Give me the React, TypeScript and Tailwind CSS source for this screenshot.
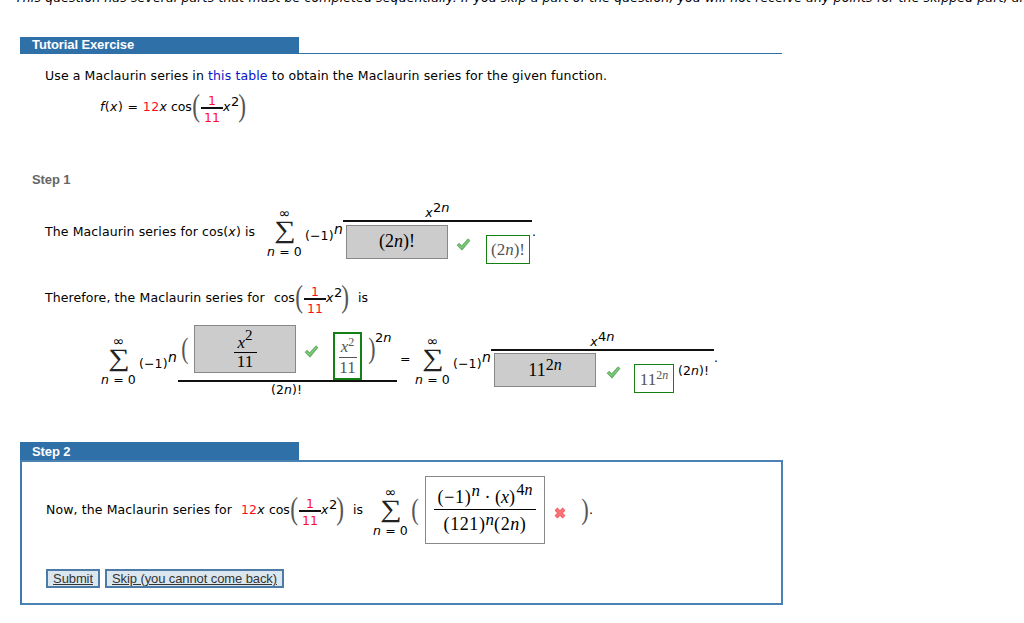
import type { ReactNode } from "react";

type PieceProps = { className?: string; children?: ReactNode };

const serif = "tracking-normal font-['Liberation_Serif',serif]";

function Piece({ className = "", children }: PieceProps) {
  return <div className={`shrink-0 whitespace-pre leading-4 ${className}`}>{children}</div>;
}

function Paren({ className = "text-[31px]", children }: PieceProps) {
  return (
    <div className={`flex h-[29px] w-[7px] shrink-0 items-center justify-center leading-none text-[#555] tracking-normal font-['Liberation_Serif',serif] ${className}`}>
      <span className="-mt-[3px] inline-block scale-x-75">{children}</span>
    </div>
  );
}

function Sum({ className = "" }: { className?: string }) {
  return (
    <div className={`flex h-[52px] w-[35px] shrink-0 flex-col items-center ${className}`}>
      <div className="h-[11px] text-[14px] leading-[11px] tracking-normal">∞</div>
      <div className="flex h-[25px] items-center text-[25px] leading-[20px] tracking-normal text-[#222] font-['Liberation_Serif',serif]">
        <span className="-mt-[4px] inline-block scale-x-120">∑</span>
      </div>
      <div className="whitespace-pre leading-4">
        <i>n</i> = 0
      </div>
    </div>
  );
}

function SignPower({ className = "" }: { className?: string }) {
  return (
    <div className={`flex w-[38px] shrink-0 items-start ${className}`}>
      <Piece className="mt-[7px] w-[29px]">(−1)</Piece>
      <Piece className="text-[14px] italic">n</Piece>
    </div>
  );
}

function CosArgument() {
  return (
    <div className="flex h-[30px] w-[74px] shrink-0 items-start">
      <Piece className="mt-[7px] w-[21px] tracking-[-0.1px]">cos</Piece>
      <Paren className="ml-px text-[31px]">(</Paren>
      <div className="ml-px flex w-[22px] shrink-0 flex-col items-center text-[#ff0a1e]">
        <div className="h-[15px] leading-[17px]">1</div>
        <div className="h-[2px] w-full bg-[#111]" />
        <div className="h-[14px] leading-[17px]">11</div>
      </div>
      <Piece className="mt-[7px] w-[8px] italic">x</Piece>
      <Piece className="mt-[2px] w-[8px] text-[13px]">2</Piece>
      <Paren>)</Paren>
    </div>
  );
}

function Check({ className = "" }: { className?: string }) {
  return (
    <svg className={`shrink-0 ${className}`} width="15" height="13" viewBox="0 0 15 13">
      <path d="M1 7.2 3.2 5.2 5.7 7.8 12 .8 14 2.5 6 12.2Z" fill="#69b969" stroke="#58a85a" strokeWidth=".7" strokeLinejoin="round" />
      <path d="M2.5 7 5.8 9.7 12.5 2.3" fill="none" stroke="#94d28e" strokeWidth=".9" />
    </svg>
  );
}

function Cross({ className = "" }: { className?: string }) {
  return (
    <svg className={`shrink-0 ${className}`} width="14" height="14" viewBox="0 0 14 14">
      <path d="M3 3 11 11M11 3 3 11" stroke="#f0606a" strokeWidth="4" />
      <path d="M3 3 11 11M11 3 3 11" stroke="#fb7478" strokeWidth="2" />
    </svg>
  );
}

function TitleBar({ children, className = "" }: PieceProps) {
  return (
    <div className={`w-[279px] bg-[#3070a9] pl-[12px] text-[13px] font-bold tracking-[-0.1px] text-white font-['Liberation_Sans',sans-serif] ${className}`}>
      {children}
    </div>
  );
}

export default function App() {
  return (
    <div className="h-[623px] w-[1024px] overflow-hidden bg-white text-[12.5px] tracking-[0.11px] text-black font-['DejaVu_Sans',sans-serif]">
      <div className="flex h-[37px] items-start pl-[15px]">
        <p className="-mt-[10px] whitespace-nowrap italic leading-4 tracking-[0.13px]">
          This question has several parts that must be completed sequentially. If you skip a part of the question, you will not receive any points for the skipped part, and you will not be able to come back to the skipped part.
        </p>
      </div>

      <section className="ml-[20px] w-[762px]">
        <div className="h-[17px] border-b border-[#3070a9]">
          <TitleBar className="h-[17px] leading-[16px]">Tutorial Exercise</TitleBar>
        </div>
        <div className="pl-[25px] pt-[14px]">
          <p className="whitespace-nowrap leading-4">
            Use a Maclaurin series in <span className="text-[#0a14c8]">this table</span> to obtain the Maclaurin series for the given function.
          </p>
          <div className="mt-[8px] flex h-[30px] items-start pl-[55px]">
            <Piece className="mt-[7px] w-[71px] tracking-[0.4px]">
              <i>f</i>(<i>x</i>) = <span className="text-[#ff0a1e]">12</span><i>x</i>
            </Piece>
            <CosArgument />
          </div>
        </div>
      </section>

      <section className="ml-[20px] h-[320px] w-[763px] pt-[50px]">
        <h2 className="pl-[12px] text-[13px] font-bold leading-4 tracking-[-0.1px] text-[#666] font-['Liberation_Sans',sans-serif]">Step 1</h2>

        <div className="mt-[17px] flex h-[60px] items-start pl-[25px]">
          <Piece className="mt-[19px] w-[222px]">
            The Maclaurin series for cos(<i>x</i>) is
          </Piece>
          <Sum className="mt-[3px]" />
          <SignPower className="ml-[3px] mt-[16px]" />
          <div className="w-[189px] shrink-0">
            <div className="flex h-[15px] items-start justify-center">
              <Piece className="italic">x</Piece>
              <Piece className="-mt-[5px] text-[13px]">2<i>n</i></Piece>
            </div>
            <div className="h-[2px] bg-[#111]" />
            <div className="flex items-start pl-[3px] pt-[3px]">
              <div className={`h-[34px] w-[102px] shrink-0 border border-[#888] bg-[#ccc] pt-px text-center text-[18px] leading-[28px] ${serif}`}>
                (2<i>n</i>)!
              </div>
              <Check className="ml-[8px] mt-[13px]" />
              <div className={`ml-[15px] mt-[10px] h-[29px] w-[44px] shrink-0 border border-[#148014] text-center text-[17px] leading-[27px] text-[#555] ${serif}`}>
                (2<i>n</i>)!
              </div>
            </div>
          </div>
          <Piece className="mt-[19px]">.</Piece>
        </div>

        <div className="mt-[18px] flex h-[30px] items-start pl-[25px]">
          <Piece className="mt-[7px] w-[229px]">Therefore, the Maclaurin series for</Piece>
          <CosArgument />
          <Piece className="ml-[10px] mt-[7px]">is</Piece>
        </div>

        <div className="mt-[12px] flex h-[76px] items-start pl-[81px]">
          <Sum className="mt-[11px]" />
          <SignPower className="ml-[3px] mt-[24px]" />
          <div className="ml-px w-[219px] shrink-0">
            <div className="flex h-[55px] items-start pl-[3px]">
              <Paren className="mt-[10px] text-[29px]">(</Paren>
              <div className={`ml-[6px] flex h-[48px] w-[102px] flex-col items-center border border-[#888] bg-[#ccc] text-[17px] ${serif}`}>
                <div className="flex h-[26px] items-start">
                  <i className="mt-[7px] leading-[20px]">x</i>
                  <span className="text-[15px] leading-[18px]">2</span>
                </div>
                <div className="h-px w-[23px] bg-black" />
                <div className="leading-[18px]">11</div>
              </div>
              <Check className="ml-[8px] mt-[20px]" />
              <div className={`ml-[14px] mt-[7px] flex h-[48px] w-[29px] flex-col items-center border-2 border-[#148014] text-[17px] text-[#555] ${serif}`}>
                <div className="flex h-[23px] items-start">
                  <i className="mt-[3px] leading-[20px]">x</i>
                  <span className="text-[12px] leading-[17px]">2</span>
                </div>
                <div className="h-px w-[18px] bg-[#555]" />
                <div className="leading-[20px]">11</div>
              </div>
              <Paren className="ml-[6px] mt-[10px] text-[29px]">)</Paren>
              <Piece className="mt-[5px] text-[13px] tracking-normal">2<i>n</i></Piece>
            </div>
            <div className="h-[2px] bg-[#111]" />
            <div className="flex justify-center whitespace-pre pr-[2px] leading-4">(2<i>n</i>)!</div>
          </div>
          <Piece className="ml-[3px] mt-[26px] w-[15px]">=</Piece>
          <Sum className="mt-[11px]" />
          <SignPower className="ml-[3px] mt-[24px]" />
          <div className="w-[223px] shrink-0 pt-[9px]">
            <div className="flex h-[15px] items-start justify-center">
              <Piece className="italic">x</Piece>
              <Piece className="-mt-[5px] text-[13px]">4<i>n</i></Piece>
            </div>
            <div className="h-[2px] bg-[#111]" />
            <div className="flex items-start pl-[3px] pt-[2px]">
              <div className={`flex h-[34px] w-[102px] justify-center border border-[#888] bg-[#ccc] text-[18px] ${serif}`}>
                <span className="mt-[3px] leading-[26px]">11</span>
                <span className="text-[16px] leading-[22px]">2<i>n</i></span>
              </div>
              <Check className="ml-[10px] mt-[13px]" />
              <div className={`ml-[13px] mt-[11px] flex h-[29px] w-[40px] justify-center border border-[#148014] text-[17px] text-[#555] ${serif}`}>
                <span className="mt-px leading-[27px]">11</span>
                <span className="text-[12px] leading-[20px]">2<i>n</i></span>
              </div>
              <Piece className="ml-[4px] mt-[10px]">(2<i>n</i>)!</Piece>
            </div>
          </div>
          <Piece className="mt-[25px]">.</Piece>
        </div>
      </section>

      <section className="ml-[20px] w-[763px]">
        <TitleBar className="h-[18px] leading-[20px]">Step 2</TitleBar>
        <div className="h-[145px] border-2 border-[#4a82b4] border-l-[#3f7bb0] pl-[24px]">
          <div className="flex h-[84px] items-start pt-[14px]">
            <Piece className="mt-[26px] w-[195px]">Now, the Maclaurin series for</Piece>
            <Piece className="mt-[26px] w-[28px]">
              <span className="text-[#ff0a1e]">12</span><i>x</i>
            </Piece>
            <div className="mt-[19px]">
              <CosArgument />
            </div>
            <Piece className="ml-[10px] mt-[26px] w-[20px]">is</Piece>
            <Sum className="mt-[11px]" />
            <Paren className="ml-[3px] mt-[20px] text-[30px]">(</Paren>
            <div className={`ml-[7px] flex h-[68px] w-[120px] shrink-0 flex-col items-center border border-[#888] text-[18px] ${serif}`}>
              <div className="flex h-[32px] items-start pt-[4px]">
                <span className="mt-[4px] leading-[24px] tracking-[0.7px]">(−1)</span>
                <i className="text-[17px] leading-[20px]">n</i>
                <span className="mt-[4px] whitespace-pre leading-[24px]"> · (<i>x</i>) </span>
                <span className="-ml-[3px] text-[16px] leading-[18px]">4<i>n</i></span>
              </div>
              <div className="h-px w-[102px] bg-black" />
              <div className="flex items-start">
                <span className="mt-[2px] leading-[24px] tracking-[0.6px]">(121)</span>
                <i className="text-[17px] leading-[20px]">n</i>
                <span className="mt-[2px] leading-[24px] tracking-[0.6px]">(2<i>n</i>)</span>
              </div>
            </div>
            <Cross className="ml-[8px] mt-[30px]" />
            <Paren className="ml-[14px] mt-[20px] text-[30px]">)</Paren>
            <Piece className="ml-px mt-[26px]">.</Piece>
          </div>
          <div className="mt-[23px] flex gap-[5px] text-[13px] tracking-[-0.1px] text-[#333] font-['Liberation_Sans',sans-serif]">
            <button className="h-[19px] w-[54px] border-2 border-[#4d7ba7] bg-[#dbe6ef] leading-[15px] underline">Submit</button>
            <button className="h-[19px] w-[179px] whitespace-nowrap border-2 border-[#4d7ba7] bg-[#dbe6ef] leading-[15px] underline">Skip (you cannot come back)</button>
          </div>
        </div>
      </section>
    </div>
  );
}
